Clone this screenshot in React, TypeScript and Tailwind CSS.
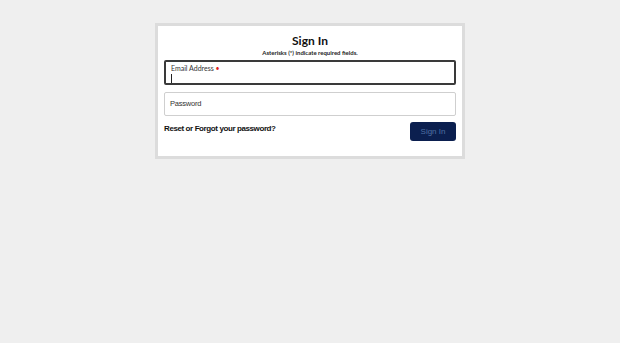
import React from 'react';

const App: React.FC = () => {
  return (
    <div className="min-h-[343px] w-full bg-[#efefef] pt-[23px]" style={{ fontFamily: 'Lato, "Liberation Sans", sans-serif' }}>
      <div className="mx-auto w-[310px] border-[3px] border-[#dcdcdc] bg-white px-[6px] pb-[15px] pt-[6px]">
        <h1 className="text-center text-[12px] font-bold leading-[17px] text-[#111]">Sign In</h1>
        <p className="text-center text-[6px] font-bold leading-[8px] text-[#222]">
          Asterisks (*) indicate required fields.
        </p>

        <div className="mt-[3px] h-[25px] rounded-[2px] border-2 border-[#3a3a3a] px-[5px] pt-[1px]">
          <div className="text-[7px] leading-[10px] text-[#333]">
            Email Address <span className="text-[#e02020]">•</span>
          </div>
          <div className="mt-[1px] h-[9px] w-[1px] bg-[#222]" />
        </div>

        <div
          className="mt-[7px] flex h-[24px] items-center rounded-[2px] border border-[#cfcfcf] px-[5px] text-[7.5px] tracking-[-0.2px] text-[#333]"
          style={{ fontFamily: '"Liberation Sans", Arial, sans-serif' }}
        >
          Password
        </div>

        <div className="mt-[6px] flex items-start justify-between" style={{ fontFamily: '"Liberation Sans", Arial, sans-serif' }}>
          <a className="mt-[1px] text-[8px] font-bold leading-[11px] tracking-[-0.4px] text-[#111]">Reset or Forgot your password?</a>
          <button className="h-[19px] w-[46px] rounded-[3px] bg-[#0b1f4f] text-[8px] text-[#4f6fa3]">Sign In</button>
        </div>
      </div>
    </div>
  );
};

export default App;
